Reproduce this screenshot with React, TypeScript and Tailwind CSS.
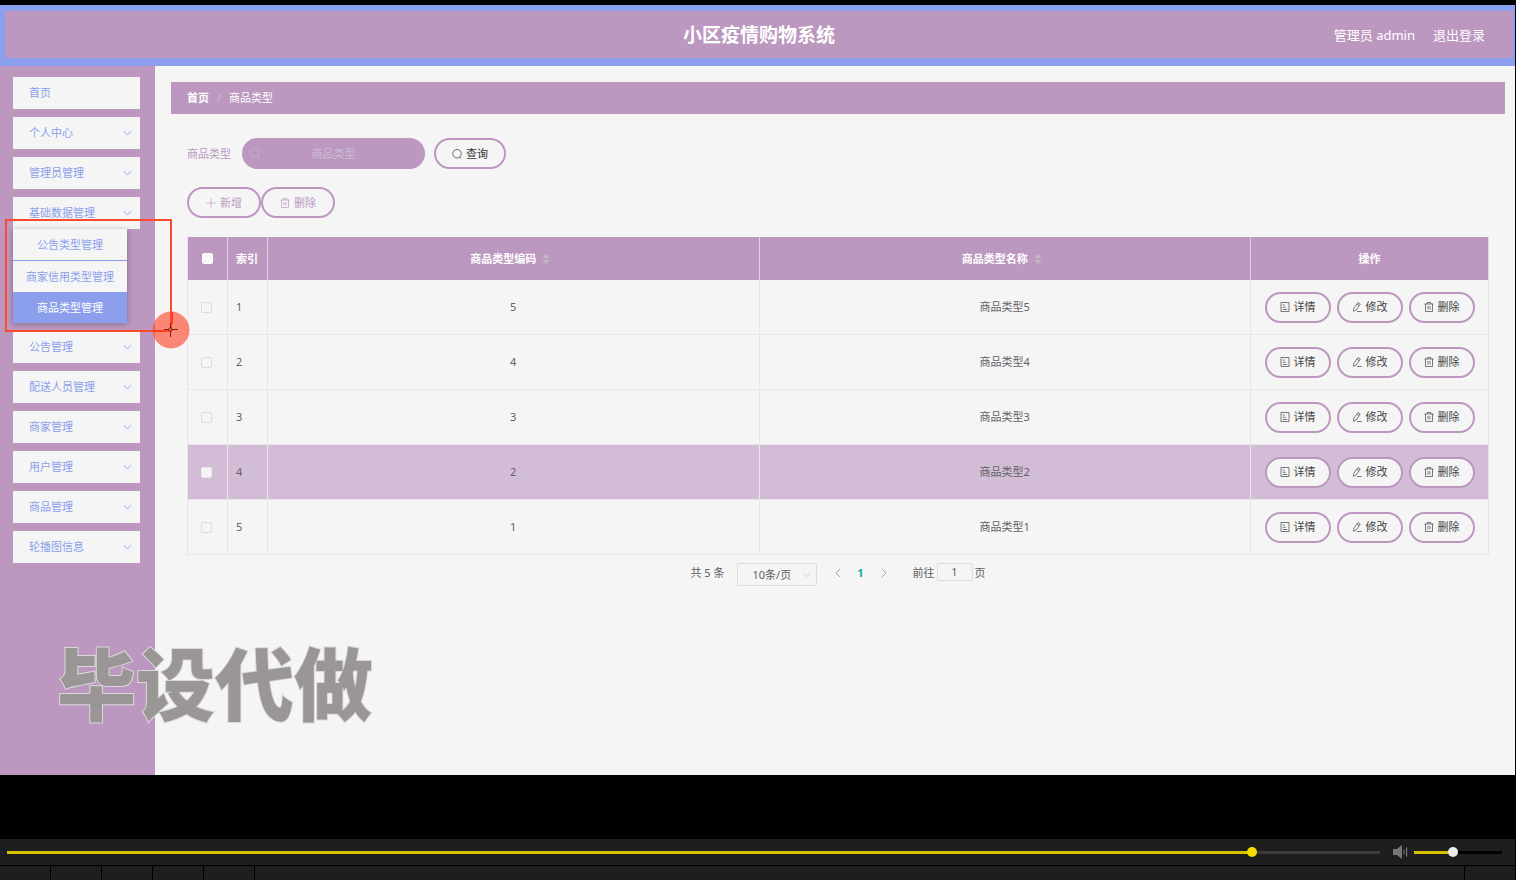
import React, { useState } from 'react';

type IconProps = { className?: string };

const svgProps = {
  viewBox: '0 0 20 20',
  fill: 'none',
  stroke: 'currentColor',
  strokeWidth: 1.4,
  'aria-hidden': true,
} as const;

const SearchIcon = ({ className }: IconProps) => (
  <svg {...svgProps} className={className}>
    <circle cx="10" cy="9.5" r="8.5" />
    <path d="M15.500 15.500l3 3.500" />
  </svg>
);

const PlusIcon = ({ className }: IconProps) => (
  <svg {...svgProps} className={className}>
    <path d="M10 1v18M1 10h18" />
  </svg>
);

const TrashIcon = ({ className }: IconProps) => (
  <svg {...svgProps} className={className}>
    <path d="M1 4h18M6.500 4V1h7v3M3 4v15h14V4M8 8v7M12 8v7" />
  </svg>
);

const DetailIcon = ({ className }: IconProps) => (
  <svg {...svgProps} className={className}>
    <path d="M2 1h16v18H2zM5.500 6h4M5.500 10.500h6M5.500 15h9" />
  </svg>
);

const EditIcon = ({ className }: IconProps) => (
  <svg {...svgProps} className={className}>
    <path d="M12 1l4.500 3-8 12L3 18.500l.5-6zM10 4.500l4.500 3M10 19h9.500" />
  </svg>
);

const ChevronDown = ({ className }: IconProps) => (
  <svg viewBox="0 0 10 6" fill="none" stroke="currentColor" aria-hidden className={className}>
    <path d="M0.8 0.8L5 5l4.2-4.2" />
  </svg>
);

const SortIcon = () => (
  <svg viewBox="0 0 8 10" fill="#c0b8c4" aria-hidden className="w-2 h-[10px]">
    <path d="M4 0l4 4H0zM4 10l4-4H0z" />
  </svg>
);

const SpeakerIcon = () => (
  <svg viewBox="0 0 15 14" fill="#777" aria-hidden className="w-[15px] h-[14px]">
    <path d="M0 4h4l5-4v14l-5-4H0z" />
    <path d="M10.500 4.500h1v5h-1zM13 2.500h1.200v9H13z" />
  </svg>
);

const menuTop = ['首页', '个人中心', '管理员管理', '基础数据管理'];
const subMenu = ['公告类型管理', '商家信用类型管理', '商品类型管理'];
const menuBottom = ['公告管理', '配送人员管理', '商家管理', '用户管理', '商品管理', '轮播图信息'];

const rows = [
  { id: 1, code: 5, name: '商品类型5' },
  { id: 2, code: 4, name: '商品类型4' },
  { id: 3, code: 3, name: '商品类型3' },
  { id: 4, code: 2, name: '商品类型2' },
  { id: 5, code: 1, name: '商品类型1' },
];

const MenuItem = ({ label }: { label: string }) => (
  <button className="w-full h-8 pl-4 pr-2 flex items-center justify-between bg-[#f5f5f5] text-[#8b9fec]">
    {label}
    {label !== '首页' && <ChevronDown className="w-[9px] h-[6px]" />}
  </button>
);

const Sidebar = () => (
  <aside className="w-[155px] shrink-0 bg-[#bc98c0] pl-[13px] pr-[15px] pt-[11px]">
    <ul className="flex flex-col gap-2">
      {menuTop.map(label => (
        <li key={label}>
          <MenuItem label={label} />
          {label === '基础数据管理' && (
            <ul className="w-[114px] shadow-[0_1px_6px_rgba(0,0,0,0.3)]">
              {subMenu.map((sub, i) => (
                <li key={sub} className={i === 0 ? 'border-b border-[#8b9fec]' : ''}>
                  <a
                    href="#"
                    className={`h-[31px] flex items-center justify-center ${
                      i === 2 ? 'bg-[#8b9fec] text-white' : 'bg-[#f5f5f5] text-[#8b9fec]'
                    }`}
                  >
                    {sub}
                  </a>
                </li>
              ))}
            </ul>
          )}
        </li>
      ))}
      {menuBottom.map(label => (
        <li key={label}>
          <MenuItem label={label} />
        </li>
      ))}
    </ul>
  </aside>
);

const pill = 'h-[31px] flex items-center gap-1 rounded-full border-2 border-[#bc98c0] bg-[#f5f5f5] whitespace-nowrap';

const checkbox = 'block appearance-none size-[11px] rounded-[2px] border';

const DataTable = () => (
  <table className="w-full table-fixed border-separate border-spacing-0 mt-[19px] border-l border-[#e9e5ea]">
    <colgroup>
      <col className="w-10" />
      <col className="w-10" />
      <col />
      <col />
      <col className="w-[238px]" />
    </colgroup>
    <thead>
      <tr className="h-[43px] bg-[#bc98c0] text-white [&>th]:border-r [&>th]:border-[#e2d3e4]">
        <th className="pl-[14px]">
          <input type="checkbox" aria-label="全选" className={`${checkbox} border-white bg-[#f8f6f8]`} />
        </th>
        <th className="pl-2 text-left">索引</th>
        <th>
          <div className="flex items-center justify-center">
            商品类型编码
            <span className="w-5 flex justify-center"><SortIcon /></span>
          </div>
        </th>
        <th>
          <div className="flex items-center justify-center">
            商品类型名称
            <span className="w-5 flex justify-center"><SortIcon /></span>
          </div>
        </th>
        <th>操作</th>
      </tr>
    </thead>
    <tbody>
      {rows.map(row => (
        <tr
          key={row.id}
          className={`h-[55px] text-[#606266] [&>td]:border-r [&>td]:border-b [&>td]:border-[#e9e5ea] ${
            row.id === 4 ? 'bg-[#d3bdd6]' : ''
          }`}
        >
          <td className="pl-[13px]">
            <input
              type="checkbox"
              aria-label={`选择 ${row.name}`}
              className={`${checkbox} bg-[#f5f5f5] ${row.id === 4 ? 'border-[#e9e5ea]' : 'border-[#dcdcde]'}`}
            />
          </td>
          <td className="pl-2">{row.id}</td>
          <td className="text-center">{row.code}</td>
          <td className="text-center">{row.name}</td>
          <td>
            <div className="flex justify-center gap-[6px] text-[#444]">
              <button className={`${pill} px-[13px]`}><DetailIcon className="size-[10px]" />详情</button>
              <button className={`${pill} px-[13px]`}><EditIcon className="size-[10px]" />修改</button>
              <button className={`${pill} px-[13px]`}><TrashIcon className="size-[10px]" />删除</button>
            </div>
          </td>
        </tr>
      ))}
    </tbody>
  </table>
);

const Pagination = () => (
  <div className="mt-2 flex justify-center items-start leading-5 text-[#606266]">
    <span>共 5 条</span>
    <div className="relative ml-3">
      <select
        aria-label="每页条数"
        className="block appearance-none w-20 h-[23px] pl-[15px] rounded-[2px] border border-[#dcdcde]"
      >
        <option>10条/页</option>
      </select>
      <ChevronDown className="absolute right-[6px] top-[9px] w-2 h-[6px] text-[#c0c4cc] pointer-events-none" />
    </div>
    <button aria-label="上一页" className="ml-4 w-[10px] h-5 flex items-center justify-center text-[#a8acb2]">
      <ChevronDown className="w-[10px] h-[6px] rotate-90" />
    </button>
    <button className="w-9 font-bold text-[#0fae9c]">1</button>
    <button aria-label="下一页" className="w-[10px] h-5 flex items-center justify-center text-[#a8acb2]">
      <ChevronDown className="w-[10px] h-[6px] -rotate-90" />
    </button>
    <label htmlFor="jump" className="ml-6">前往</label>
    <input
      id="jump"
      defaultValue="1"
      className="w-9 h-[18px] mx-[2px] text-center rounded-[2px] border border-[#dcdcde]"
    />
    <span>页</span>
  </div>
);

const rangeBase =
  'appearance-none h-[3px] outline-none [&::-webkit-slider-thumb]:appearance-none [&::-webkit-slider-thumb]:size-[10px] [&::-webkit-slider-thumb]:rounded-full';

const PlayerBar = () => {
  const [progress, setProgress] = useState(91);
  const [volume, setVolume] = useState(43);

  return (
    <footer className="pr-px">
      <div className="h-[26px] pl-[7px] pr-[13px] flex items-center bg-[#1e1e1e]">
        <input
          type="range"
          aria-label="播放进度"
          value={progress}
          onChange={e => setProgress(Number(e.target.value))}
          className={`${rangeBase} flex-1 min-w-0 [&::-webkit-slider-thumb]:bg-[#f5dc00]`}
          style={{ background: `linear-gradient(to right, #d8c200 ${progress}%, #3c3c3c ${progress}%)` }}
        />
        <button aria-label="静音" className="ml-[13px] mr-[6px]"><SpeakerIcon /></button>
        <input
          type="range"
          aria-label="音量"
          value={volume}
          onChange={e => setVolume(Number(e.target.value))}
          className={`${rangeBase} w-[88px] [&::-webkit-slider-thumb]:bg-[#ececec]`}
          style={{ background: `linear-gradient(to right, #d8c200 ${volume}%, #000 ${volume}%)` }}
        />
      </div>
      <div className="h-[14px] mt-px flex gap-px">
        {[0, 1, 2, 3, 4].map(i => (
          <div key={i} className="w-[50px] bg-[#1e1e1e]" />
        ))}
        <div className="flex-1 bg-[#1e1e1e]" />
        <div className="w-[50px] bg-[#1e1e1e]" />
      </div>
    </footer>
  );
};

export default function App() {
  return (
    <div className="min-h-screen pt-[5px] flex flex-col bg-black text-[11px] leading-4 font-['Noto_Sans','Noto_Sans_CJK_SC',sans-serif]">
      <div className="relative flex-1 flex flex-col mr-px bg-[#f5f5f5]">
        <header className="h-[61px] px-7 grid grid-cols-[1fr_auto_1fr] items-center bg-[#bc98c0] text-white border-t-[6px] border-b-[8px] border-l-[5px] border-r-2 border-[#8b9fec]">
          <span />
          <h1 className="text-[19px] leading-6 font-bold">小区疫情购物系统</h1>
          <div className="flex justify-end gap-[18px] text-[13px]">
            <span>管理员 admin</span>
            <a href="#">退出登录</a>
          </div>
        </header>

        <div className="flex-1 flex">
          <Sidebar />
          <main className="flex-1 min-w-0 pl-4 pr-[10px] pt-4">
            <nav className="h-8 px-4 flex items-center gap-2 bg-[#bc98c0] text-white">
              <a href="#" className="font-bold">首页</a>
              <span className="text-[#c0c4cc]">/</span>
              <span>商品类型</span>
            </nav>

            <div className="px-4 pt-6">
              <form className="flex items-center" onSubmit={e => e.preventDefault()}>
                <label htmlFor="type" className="text-[#bc98c0]">商品类型</label>
                <div className="relative ml-[11px] mr-[9px]">
                  <SearchIcon className="absolute left-2 top-[10px] size-[10px] text-[#c9b8d4]" />
                  <input
                    id="type"
                    placeholder="商品类型"
                    className="block w-[183px] h-[31px] rounded-full bg-[#bc98c0] text-center text-white placeholder:text-[#cdbcd6] outline-none"
                  />
                </div>
                <button className={`${pill} px-4 text-[#333]`}><SearchIcon className="size-[10px]" />查询</button>
              </form>

              <div className="flex mt-[18px] text-[#bc98c0]">
                <button className={`${pill} px-[17px]`}><PlusIcon className="size-[10px]" />新增</button>
                <button className={`${pill} px-[17px]`}><TrashIcon className="size-[10px]" />删除</button>
              </div>

              <DataTable />
              <Pagination />
            </div>
          </main>
        </div>

        {/* screen annotation left by the recorder */}
        <div className="absolute left-[5px] top-[214px] w-[167px] h-[113px] border-2 border-[#fb4a2c] pointer-events-none" />
        <svg viewBox="0 0 38 38" aria-hidden className="absolute left-[152px] top-[306px] size-[38px] pointer-events-none">
          <circle cx="19" cy="19" r="18.500" fill="#ff4a30" fillOpacity="0.65" />
          <path d="M1 20h12M20 1v12" stroke="#fb3a1c" strokeWidth="2" />
          <path d="M18.500 12v5M18.500 21v5M12 18.500h5M20 18.500h6" stroke="#7a2418" />
          <circle cx="18.500" cy="18.500" r="1.800" fill="none" stroke="#7a2418" />
        </svg>

        <p className="absolute left-[57px] bottom-[50px] text-[79px] leading-[80px] font-black text-[#999695] [-webkit-text-stroke:2px_#dcdad9] [paint-order:stroke_fill] pointer-events-none">
          毕设代做
        </p>
      </div>

      <div className="h-16" />
      <PlayerBar />
    </div>
  );
}
